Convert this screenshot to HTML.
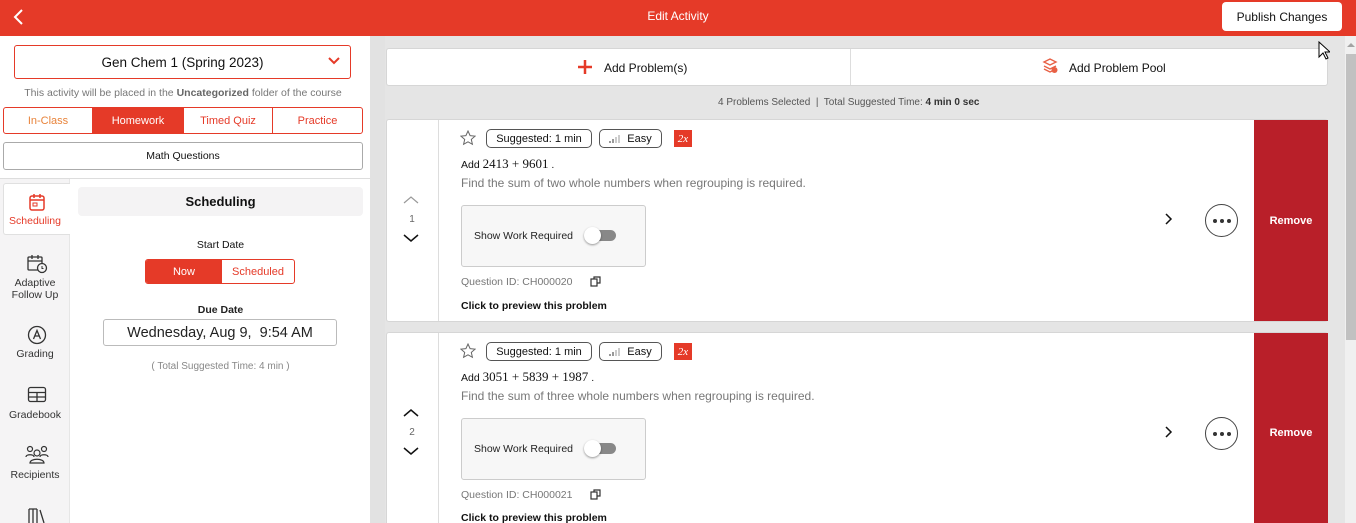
<!DOCTYPE html>
<html style="overflow:hidden;width:1356px;height:523px"><head><style>
*{box-sizing:border-box;margin:0;padding:0}
html,body{overflow:hidden}
body{width:1356px;height:523px;font-family:"Liberation Sans",sans-serif;background:#e5e5e5;position:relative;font-size:12px;color:#111}
.abs{position:absolute}
.hdr{left:0;top:0;width:1356px;height:36px;background:#e53a28}
.left{left:0;top:36px;width:370px;height:487px;background:#fff}
.ctr{display:flex;align-items:center;justify-content:center}
.tab{border-right:1px solid #e53a28;color:#e53a28;font-size:11px}
.nav{left:0;width:70px;text-align:center;font-size:10.5px;color:#333}
.card{left:386px;width:942px;background:#fff;border:1px solid #d6d6d6;border-radius:3px;overflow:hidden}
.pill{display:flex;align-items:center;justify-content:center;border:1px solid #555;border-radius:5px;height:19px;font-size:11px;color:#111}
.dots{display:flex;gap:3px;align-items:center;justify-content:center}
.dots i{width:4px;height:4px;border-radius:50%;background:#333;display:block}
</style></head><body>
<div class="abs hdr"></div>
<svg class="abs" style="left:12px;top:8px" width="14" height="18"><path d="M10 2 L3 9 L10 16" stroke="#fff" stroke-width="2" fill="none"/></svg>
<div class="abs" style="left:0;top:9px;width:1356px;text-align:center;color:#fff;font-size:12px">Edit Activity</div>
<div class="abs ctr" style="left:1222px;top:2px;width:120px;height:29px;background:#fff;border-radius:4px;font-size:12px;color:#111">Publish Changes</div>

<div class="abs left"></div>
<div class="abs" style="left:370px;top:36px;width:15px;height:487px;background:#e2e2e2"></div>
<div class="abs ctr" style="left:14px;top:45px;width:337px;height:34px;border:1px solid #e53a28;border-radius:3px;font-size:13.5px">Gen Chem 1 (Spring 2023)</div>
<svg class="abs" style="left:328px;top:57px" width="12" height="8"><path d="M1 1 L6 6 L11 1" stroke="#e53a28" stroke-width="2" fill="none"/></svg>
<div class="abs" style="left:0;top:87px;width:366px;text-align:center;font-size:10.5px;color:#777">This activity will be placed in the <b style="color:#666">Uncategorized</b> folder of the course</div>
<div class="abs" style="left:3px;top:107px;width:360px;height:27px;border:1px solid #e53a28;border-radius:3px;display:flex;overflow:hidden">
<div class="tab ctr" style="width:89px;color:#e8833a">In-Class</div>
<div class="tab ctr" style="width:91px;background:#e53a28;color:#fff">Homework</div>
<div class="tab ctr" style="width:89px">Timed Quiz</div>
<div class="ctr" style="flex:1;color:#e53a28;font-size:11px">Practice</div>
</div>
<div class="abs ctr" style="left:3px;top:142px;width:360px;height:28px;border:1px solid #aaa;border-radius:3px;font-size:10.5px">Math Questions</div>
<div class="abs" style="left:0;top:178px;width:370px;height:1px;background:#ddd"></div>
<div class="abs" style="left:0;top:179px;width:70px;height:344px;background:#f5f4f5;border-right:1px solid #e6e6e6"></div>
<div class="abs" style="left:3px;top:183px;width:67px;height:52px;background:#fff;border:1px solid #e0e0e0;border-right:none;border-radius:3px 0 0 3px"></div>
<svg class="abs" style="left:28px;top:192px" width="18" height="20"><rect x="2" y="4" width="14" height="14" rx="2" stroke="#e53a28" stroke-width="1.5" fill="none"/><path d="M2 8h14M6 2v4M12 2v4" stroke="#e53a28" stroke-width="1.5"/><rect x="5" y="11" width="4" height="3" stroke="#e53a28" fill="none"/></svg>
<div class="abs nav" style="top:215px;color:#e53a28">Scheduling</div>
<svg class="abs" style="left:26px;top:254px" width="22" height="20"><rect x="2" y="3" width="14" height="13" rx="1" stroke="#333" stroke-width="1.3" fill="none"/><path d="M2 7h14M6 1v4M12 1v4" stroke="#333" stroke-width="1.3"/><circle cx="16" cy="14" r="4.5" fill="#f5f4f5" stroke="#333" stroke-width="1.3"/><path d="M16 12v2.5h1.5" stroke="#333" fill="none"/></svg>
<div class="abs nav" style="top:277px;line-height:12px">Adaptive<br>Follow Up</div>
<svg class="abs" style="left:27px;top:325px" width="20" height="20"><circle cx="10" cy="10" r="8.5" stroke="#333" stroke-width="1.3" fill="none"/><path d="M6.5 14 L10 5.5 L13.5 14 M7.7 11h4.6" stroke="#333" stroke-width="1.3" fill="none"/></svg>
<div class="abs nav" style="top:348px">Grading</div>
<svg class="abs" style="left:27px;top:386px" width="20" height="18"><rect x="1.5" y="1.5" width="17" height="14" rx="2" stroke="#333" stroke-width="1.3" fill="none"/><path d="M1.5 6.5h17M1.5 11h17M10 6.5v9" stroke="#333" stroke-width="1.3"/></svg>
<div class="abs nav" style="top:409px">Gradebook</div>
<svg class="abs" style="left:25px;top:445px" width="24" height="20"><circle cx="5" cy="4" r="2.5" stroke="#333" fill="none" stroke-width="1.2"/><circle cx="19" cy="4" r="2.5" stroke="#333" fill="none" stroke-width="1.2"/><circle cx="12" cy="8" r="3" stroke="#333" fill="none" stroke-width="1.2"/><path d="M1 12c0-3 8-3 8 0M15 12c0-3 8-3 8 0M5 18c0-5 14-5 14 0z" stroke="#333" fill="none" stroke-width="1.2"/></svg>
<div class="abs nav" style="top:469px">Recipients</div>
<svg class="abs" style="left:27px;top:507px" width="20" height="16"><path d="M2 2v14M6 2v14M10 2v14M2 2h8M13 3l4 13" stroke="#333" stroke-width="1.3" fill="none"/></svg>

<div class="abs ctr" style="left:78px;top:187px;width:285px;height:29px;background:#f4f3f4;border-radius:4px;font-weight:bold;font-size:13px">Scheduling</div>
<div class="abs" style="left:78px;top:239px;width:285px;text-align:center;font-size:10.5px">Start Date</div>
<div class="abs" style="left:145px;top:259px;width:150px;height:25px;border:1px solid #e53a28;border-radius:3px;display:flex;overflow:hidden;font-size:11px">
<div class="ctr" style="width:76px;background:#e53a28;color:#fff">Now</div><div class="ctr" style="flex:1;color:#e53a28">Scheduled</div></div>
<div class="abs" style="left:78px;top:304px;width:285px;text-align:center;font-size:10.5px;font-weight:bold;color:#222">Due Date</div>
<div class="abs ctr" style="left:103px;top:319px;width:234px;height:27px;border:1px solid #bbb;border-radius:3px;font-size:14.5px;color:#222">Wednesday, Aug 9,&nbsp; 9:54 AM</div>
<div class="abs" style="left:78px;top:361px;width:285px;text-align:center;font-size:10px;color:#888">( Total Suggested Time: 4 min )</div>

<div class="abs" style="left:386px;top:48px;width:942px;height:38px;background:#fff;border:1px solid #d6d6d6;border-radius:3px"></div>
<div class="abs" style="left:850px;top:49px;width:1px;height:36px;background:#ddd"></div>
<svg class="abs" style="left:578px;top:60px" width="14" height="14"><path d="M7 0v14M0 7h14" stroke="#e53a28" stroke-width="2.5"/></svg>
<div class="abs" style="left:604px;top:61px;font-size:12px">Add Problem(s)</div>
<svg class="abs" style="left:1042px;top:58px" width="16" height="16"><path d="M2 4l6-3 6 3-6 3z M2 8l6 3 6-3 M2 11l6 3 4-2" stroke="#e86045" stroke-width="1.4" fill="none"/><circle cx="12.5" cy="12" r="3" fill="#e86045"/></svg>
<div class="abs" style="left:1069px;top:61px;font-size:12px">Add Problem Pool</div>
<div class="abs" style="left:718px;top:97px;font-size:10px;color:#555">4 Problems Selected &nbsp;|&nbsp; Total Suggested Time: <b style="color:#333">4 min 0 sec</b></div>

<div class="abs card" style="top:119px;height:203px"></div>
<div class="abs card" style="top:332px;height:191px;border-bottom:none;border-radius:3px 3px 0 0"></div>

<div class="abs" style="left:438px;top:120px;width:1px;height:201px;background:#ddd"></div>
<div class="abs" style="left:438px;top:333px;width:1px;height:190px;background:#ddd"></div>
<div class="abs" style="left:1254px;top:120px;width:74px;height:201px;background:#b91f29;color:#fff;font-size:11px;font-weight:bold" ><div class="ctr" style="height:100%">Remove</div></div>
<div class="abs" style="left:1254px;top:333px;width:74px;height:190px;background:#b91f29;color:#fff;font-size:11px;font-weight:bold"><div class="ctr" style="height:200px">Remove</div></div>

<!-- card1 -->
<svg class="abs" style="left:403px;top:195px" width="16" height="10"><path d="M1 8l7-6 7 6" stroke="#999" stroke-width="1.2" fill="none"/></svg>
<div class="abs" style="left:386px;top:214px;width:52px;text-align:center;font-size:10px;color:#666">1</div>
<svg class="abs" style="left:403px;top:233px" width="16" height="10"><path d="M1 2l7 6 7-6" stroke="#111" stroke-width="1.5" fill="none"/></svg>
<svg class="abs" style="left:460px;top:130px" width="16" height="16"><path d="M8 1l2.1 4.6 5 .5-3.8 3.3 1.1 4.9L8 11.8 3.6 14.3l1.1-4.9L.9 6.1l5-.5z" stroke="#666" fill="none"/></svg>
<div class="abs pill" style="left:486px;top:129px;width:106px">Suggested: 1 min</div>
<div class="abs pill" style="left:599px;top:129px;width:63px"><svg width="12" height="8" style="margin-right:6px"><rect x="0" y="6" width="2" height="2" fill="#999"/><rect x="3" y="4" width="2" height="4" fill="#999"/><rect x="6" y="2" width="2" height="6" fill="#ccc"/><rect x="9" y="0" width="2" height="8" fill="#ccc"/></svg>Easy</div>
<div class="abs ctr" style="left:674px;top:130px;width:18px;height:17px;background:#e53a28;color:#fff;font-family:'Liberation Serif',serif;font-style:italic;font-size:11px">2x</div>
<div class="abs" style="left:461px;top:156px;font-size:10.5px">Add <span style="font-family:'Liberation Serif',serif;font-size:13px">2413 + 9601</span> .</div>
<div class="abs" style="left:461px;top:176px;font-size:12px;color:#777">Find the sum of two whole numbers when regrouping is required.</div>
<div class="abs" style="left:461px;top:205px;width:185px;height:62px;background:#f7f7f7;border:1px solid #ccc;border-radius:3px"></div>
<div class="abs" style="left:474px;top:230px;font-size:10.5px;color:#222">Show Work Required</div>
<div class="abs" style="left:587px;top:230px;width:29px;height:11px;background:#888;border-radius:6px"></div>
<div class="abs" style="left:584px;top:227px;width:17px;height:17px;background:#fff;border-radius:50%;box-shadow:0 1px 2px rgba(0,0,0,.4)"></div>
<div class="abs" style="left:461px;top:276px;font-size:10.5px;color:#777">Question ID: CH000020</div>
<svg class="abs" style="left:590px;top:276px" width="11" height="11"><rect x="1" y="3" width="6" height="7" stroke="#333" fill="none" stroke-width="1.2"/><path d="M4 3V1h6v6H7" stroke="#333" fill="none" stroke-width="1.2"/></svg>
<div class="abs" style="left:461px;top:300px;font-size:10.5px;font-weight:bold">Click to preview this problem</div>
<svg class="abs" style="left:1165px;top:213px" width="8" height="12"><path d="M1 1l5 5-5 5" stroke="#111" stroke-width="1.5" fill="none"/></svg>
<div class="abs dots" style="left:1205px;top:204px;width:33px;height:33px;border:1px solid #444;border-radius:50%"><i></i><i></i><i></i></div>

<!-- card2 -->
<svg class="abs" style="left:403px;top:408px" width="16" height="10"><path d="M1 8l7-6 7 6" stroke="#111" stroke-width="1.5" fill="none"/></svg>
<div class="abs" style="left:386px;top:427px;width:52px;text-align:center;font-size:10px;color:#666">2</div>
<svg class="abs" style="left:403px;top:446px" width="16" height="10"><path d="M1 2l7 6 7-6" stroke="#111" stroke-width="1.5" fill="none"/></svg>
<svg class="abs" style="left:460px;top:343px" width="16" height="16"><path d="M8 1l2.1 4.6 5 .5-3.8 3.3 1.1 4.9L8 11.8 3.6 14.3l1.1-4.9L.9 6.1l5-.5z" stroke="#666" fill="none"/></svg>
<div class="abs pill" style="left:486px;top:342px;width:106px">Suggested: 1 min</div>
<div class="abs pill" style="left:599px;top:342px;width:63px"><svg width="12" height="8" style="margin-right:6px"><rect x="0" y="6" width="2" height="2" fill="#999"/><rect x="3" y="4" width="2" height="4" fill="#999"/><rect x="6" y="2" width="2" height="6" fill="#ccc"/><rect x="9" y="0" width="2" height="8" fill="#ccc"/></svg>Easy</div>
<div class="abs ctr" style="left:674px;top:343px;width:18px;height:17px;background:#e53a28;color:#fff;font-family:'Liberation Serif',serif;font-style:italic;font-size:11px">2x</div>
<div class="abs" style="left:461px;top:369px;font-size:10.5px">Add <span style="font-family:'Liberation Serif',serif;font-size:13px">3051 + 5839 + 1987</span> .</div>
<div class="abs" style="left:461px;top:389px;font-size:12px;color:#777">Find the sum of three whole numbers when regrouping is required.</div>
<div class="abs" style="left:461px;top:418px;width:185px;height:62px;background:#f7f7f7;border:1px solid #ccc;border-radius:3px"></div>
<div class="abs" style="left:474px;top:443px;font-size:10.5px;color:#222">Show Work Required</div>
<div class="abs" style="left:587px;top:443px;width:29px;height:11px;background:#888;border-radius:6px"></div>
<div class="abs" style="left:584px;top:440px;width:17px;height:17px;background:#fff;border-radius:50%;box-shadow:0 1px 2px rgba(0,0,0,.4)"></div>
<div class="abs" style="left:461px;top:489px;font-size:10.5px;color:#777">Question ID: CH000021</div>
<svg class="abs" style="left:590px;top:489px" width="11" height="11"><rect x="1" y="3" width="6" height="7" stroke="#333" fill="none" stroke-width="1.2"/><path d="M4 3V1h6v6H7" stroke="#333" fill="none" stroke-width="1.2"/></svg>
<div class="abs" style="left:461px;top:512px;font-size:10.5px;font-weight:bold">Click to preview this problem</div>
<svg class="abs" style="left:1165px;top:426px" width="8" height="12"><path d="M1 1l5 5-5 5" stroke="#111" stroke-width="1.5" fill="none"/></svg>
<div class="abs dots" style="left:1205px;top:417px;width:33px;height:33px;border:1px solid #444;border-radius:50%"><i></i><i></i><i></i></div>

<div class="abs" style="left:1345px;top:36px;width:11px;height:487px;background:#f0f0f0"></div>
<div class="abs" style="left:1346px;top:54px;width:10px;height:286px;background:#c1c1c1"></div>
<svg class="abs" style="left:1347px;top:42px" width="8" height="6"><path d="M0 5l4-4 4 4z" fill="#a3a3a3"/></svg>
<svg class="abs" style="left:1318px;top:41px" width="12" height="20"><path d="M1 1v15l4-4 3 6 2-1-3-6h5z" fill="#fff" stroke="#000"/></svg>
</body></html>
